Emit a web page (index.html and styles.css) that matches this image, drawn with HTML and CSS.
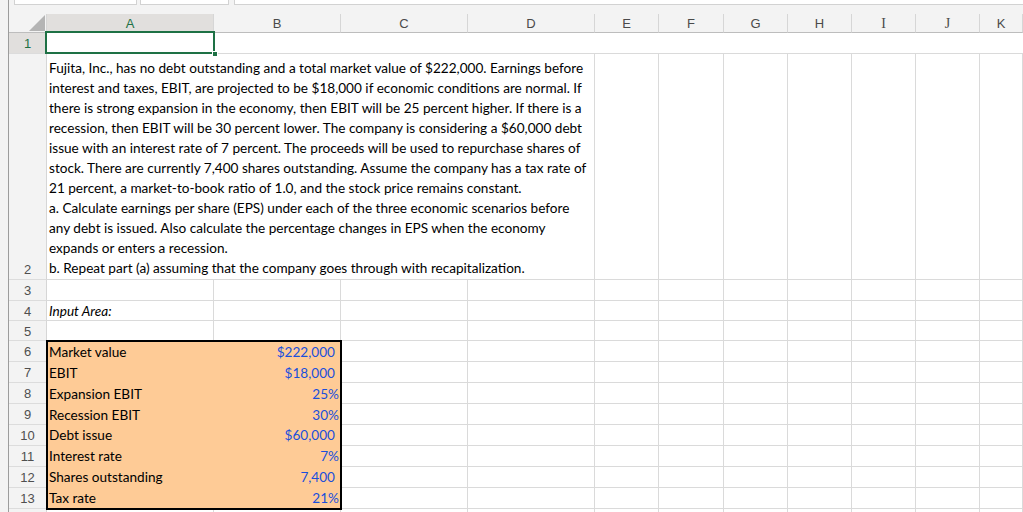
FILE: index.html
```html
<!DOCTYPE html>
<html>
<head>
<meta charset="utf-8">
<link rel="stylesheet" href="styles.css">
</head>
<body>
<div class="app">
  <div class="gutter"></div>
  <div class="pane">
    <div class="top">
      <div class="tb tb1"></div>
      <div class="tb tb2"></div>
      <div class="tb tb3"></div>
    </div>
    <div class="sheet">
      <div class="hc corner"><svg width="16" height="16" viewBox="0 0 16 16"><polygon points="16,0 16,16 0,16" fill="#b4b4b4"/></svg></div>
      <div class="hc sel">A</div>
      <div class="hc">B</div>
      <div class="hc">C</div>
      <div class="hc">D</div>
      <div class="hc">E</div>
      <div class="hc">F</div>
      <div class="hc">G</div>
      <div class="hc">H</div>
      <div class="hc sf">I</div>
      <div class="hc sf">J</div>
      <div class="hc">K</div>

      <div class="rh sel">1</div>
      <div class="c nv"></div>
      <div class="c nv span10"></div>

      <div class="rh rh-bottom">2</div>
      <div class="c problem">Fujita, Inc., has no debt outstanding and a total market value of $222,000. Earnings before<br>interest and taxes, EBIT, are projected to be $18,000 if economic conditions are normal. If<br>there is strong expansion in the economy, then EBIT will be 25 percent higher. If there is a<br>recession, then EBIT will be 30 percent lower. The company is considering a $60,000 debt<br>issue with an interest rate of 7 percent. The proceeds will be used to repurchase shares of<br>stock. There are currently 7,400 shares outstanding. Assume the company has a tax rate of<br>21 percent, a market-to-book ratio of 1.0, and the stock price remains constant.<br>a. Calculate earnings per share (EPS) under each of the three economic scenarios before<br>any debt is issued. Also calculate the percentage changes in EPS when the economy<br>expands or enters a recession.<br>b. Repeat part (a) assuming that the company goes through with recapitalization.</div>
      <div class="c"></div><div class="c"></div><div class="c"></div><div class="c"></div><div class="c"></div><div class="c"></div><div class="c"></div>

      <div class="rh">3</div>
      <div class="c"></div><div class="c"></div><div class="c"></div><div class="c"></div><div class="c"></div><div class="c"></div><div class="c"></div><div class="c"></div><div class="c"></div><div class="c"></div><div class="c"></div>

      <div class="rh">4</div>
      <div class="c txt it">Input Area:</div><div class="c"></div><div class="c"></div><div class="c"></div><div class="c"></div><div class="c"></div><div class="c"></div><div class="c"></div><div class="c"></div><div class="c"></div><div class="c"></div>

      <div class="rh">5</div>
      <div class="c"></div><div class="c"></div><div class="c"></div><div class="c"></div><div class="c"></div><div class="c"></div><div class="c"></div><div class="c"></div><div class="c"></div><div class="c"></div><div class="c"></div>

      <div class="inputs">
        <div class="ir"><span>Market value</span><span class="v">$222,000</span></div>
        <div class="ir"><span>EBIT</span><span class="v">$18,000</span></div>
        <div class="ir"><span>Expansion EBIT</span><span class="v pct">25%</span></div>
        <div class="ir"><span>Recession EBIT</span><span class="v pct">30%</span></div>
        <div class="ir"><span>Debt issue</span><span class="v">$60,000</span></div>
        <div class="ir"><span>Interest rate</span><span class="v pct">7%</span></div>
        <div class="ir"><span>Shares outstanding</span><span class="v">7,400</span></div>
        <div class="ir"><span>Tax rate</span><span class="v pct">21%</span></div>
      </div>

      <div class="rh">6</div>
      <div class="c"></div><div class="c"></div><div class="c"></div><div class="c"></div><div class="c"></div><div class="c"></div><div class="c"></div><div class="c"></div><div class="c"></div>
      <div class="rh">7</div>
      <div class="c"></div><div class="c"></div><div class="c"></div><div class="c"></div><div class="c"></div><div class="c"></div><div class="c"></div><div class="c"></div><div class="c"></div>
      <div class="rh">8</div>
      <div class="c"></div><div class="c"></div><div class="c"></div><div class="c"></div><div class="c"></div><div class="c"></div><div class="c"></div><div class="c"></div><div class="c"></div>
      <div class="rh">9</div>
      <div class="c"></div><div class="c"></div><div class="c"></div><div class="c"></div><div class="c"></div><div class="c"></div><div class="c"></div><div class="c"></div><div class="c"></div>
      <div class="rh">10</div>
      <div class="c"></div><div class="c"></div><div class="c"></div><div class="c"></div><div class="c"></div><div class="c"></div><div class="c"></div><div class="c"></div><div class="c"></div>
      <div class="rh">11</div>
      <div class="c"></div><div class="c"></div><div class="c"></div><div class="c"></div><div class="c"></div><div class="c"></div><div class="c"></div><div class="c"></div><div class="c"></div>
      <div class="rh">12</div>
      <div class="c"></div><div class="c"></div><div class="c"></div><div class="c"></div><div class="c"></div><div class="c"></div><div class="c"></div><div class="c"></div><div class="c"></div>
      <div class="rh">13</div>
      <div class="c"></div><div class="c"></div><div class="c"></div><div class="c"></div><div class="c"></div><div class="c"></div><div class="c"></div><div class="c"></div><div class="c"></div>
      <div class="rh"></div>
      <div class="c"></div><div class="c"></div><div class="c"></div><div class="c"></div><div class="c"></div><div class="c"></div><div class="c"></div><div class="c"></div><div class="c"></div><div class="c"></div><div class="c"></div>

      <div class="selection"><div class="handle"></div></div>
    </div>
  </div>
</div>
</body>
</html>
```

FILE: styles.css
```css
* { box-sizing: border-box; }
html, body { margin: 0; padding: 0; background: #ffffff; }
body { width: 1023px; height: 512px; overflow: hidden; }

.app { display: flex; height: 512px; }
.gutter { width: 9px; flex: none; background: #f3f3f3; border-right: 1px solid #9c9c9c; }
.pane { flex: 1; display: flex; flex-direction: column; min-width: 0; }

.top { height: 14px; flex: none; background: #f3f3f3; display: flex; align-items: flex-start; padding-left: 5px; gap: 3px; }
.tb { height: 5px; background: #ffffff; border: 1px solid #d2d2d2; border-top: none; }
.tb1 { width: 123px; }
.tb2 { width: 89px; margin-right: 2px; }
.tb3 { flex: 1; border-right: none; }

.sheet {
  position: relative;
  flex: 1;
  display: grid;
  grid-template-columns: 38px 167px 127px 127px 127px 64px 65px 64px 64px 64px 64px 1fr;
  grid-template-rows: 19px 21px 226px 21px 20px 20px repeat(8, 21px);
  grid-auto-rows: 21px;
  overflow: hidden;
  font-family: "Lato", "Liberation Sans", sans-serif;
  font-size: 13.6px;
  color: #000;
}

.hc {
  background: #f3f3f3;
  border-right: 1px solid #d6d6d6;
  border-bottom: 1px solid #bdbdbd;
  display: flex; align-items: center; justify-content: center;
  font-family: "Liberation Sans", sans-serif;
  font-size: 13px;
  color: #4a4a4a;
  padding-top: 1px;
}
.hc.sf { font-family: "Liberation Serif", serif; font-size: 14px; }
.hc.sel { background: #e1dfdd; color: #1e7145; }
.corner { justify-content: flex-end; align-items: flex-end; padding: 0 1px 1px 0; }
.corner svg { display: block; }

.rh {
  background: #f3f3f3;
  border-right: 1px solid #d6d6d6;
  border-bottom: 1px solid #dcdcdc;
  display: flex; align-items: center; justify-content: center;
  font-family: "Liberation Sans", sans-serif;
  font-size: 13px;
  color: #4f4f4f;
  padding-top: 1px;
}
.rh.sel { background: #e1dfdd; color: #1e7145; }
.rh-bottom { align-items: flex-end; padding-bottom: 2px; }

.c { border-right: 1px solid #dadada; border-bottom: 1px solid #dadada; }
.c.nv { border-right: none; }
.span10 { grid-column: span 10; }

.problem {
  grid-column: span 4;
  display: flex; flex-direction: column; justify-content: flex-end;
  padding: 0 0 1px 2px;
  line-height: 20px;
  white-space: nowrap;
}
.txt { display: flex; align-items: center; padding-left: 2px; white-space: nowrap; }
.it { font-style: italic; }

.inputs {
  grid-column: 2 / 4;
  grid-row: 7 / 15;
  margin: -1px;
  background: #fecb96;
  border: 2px solid #000000;
  display: flex; flex-direction: column;
  position: relative; z-index: 1;
}
.ir { flex: 1; display: flex; justify-content: space-between; align-items: center; padding-left: 1px; white-space: nowrap; }
.v { color: #1a4fdc; padding-right: 5px; }
.v.pct { padding-right: 1px; }

.selection {
  position: absolute;
  left: 36px; top: 17px;
  width: 170px; height: 23px;
  border: 2px solid #1e7145;
  z-index: 2;
}
.handle {
  position: absolute;
  right: -5px; bottom: -5px;
  width: 6px; height: 6px;
  background: #1e7145;
  border: 1px solid #ffffff;
}
```
